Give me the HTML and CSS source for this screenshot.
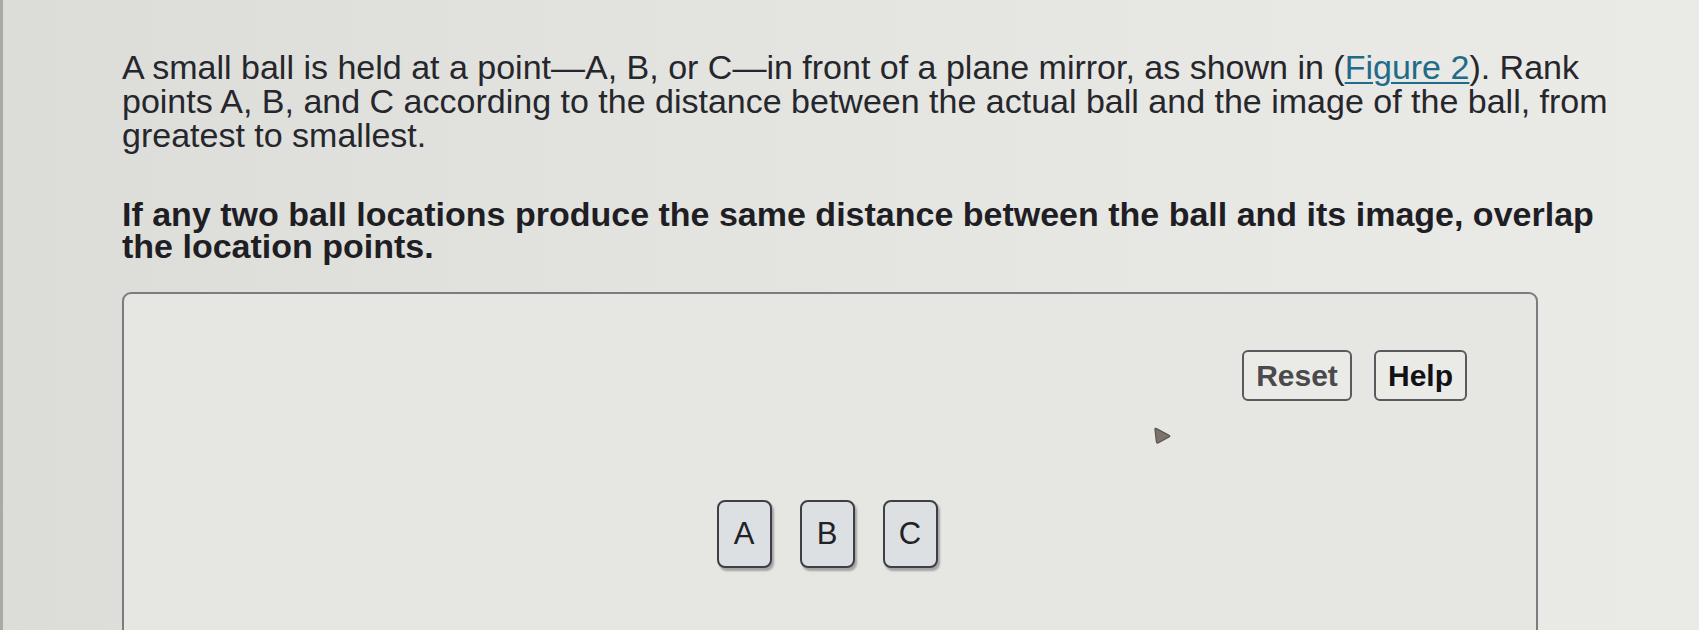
FILE: index.html
```html
<!DOCTYPE html>
<html lang="en">
<head>
<meta charset="utf-8">
<title>Plane mirror ranking</title>
<link rel="stylesheet" href="styles.css">
</head>
<body>
<div class="page">
  <div class="question">
    <p class="prompt">A small ball is held at a point—A, B, or C—in front of a plane mirror, as shown in (<a class="fig-link" href="#">Figure 2</a>). Rank points A, B, and C according to the distance between the actual ball and the image of the ball, from greatest to smallest.</p>
    <p class="instruction">If any two ball locations produce the same distance between the ball and its image, overlap the location points.</p>
  </div>
  <div class="workspace">
    <div class="toolbar">
      <button class="btn btn-reset" type="button">Reset</button>
      <button class="btn btn-help" type="button">Help</button>
    </div>
    <div class="tiles">
      <div class="tile">A</div>
      <div class="tile">B</div>
      <div class="tile">C</div>
    </div>
  </div>
  <svg class="cursor" width="20" height="18" viewBox="0 0 20 18" aria-hidden="true">
    <path d="M3 2.5 Q2.5 1 4.5 1.6 L17 8.2 Q18.6 9.2 17 10 L6.5 15.8 Q4.6 16.6 4.4 14.6 Z" fill="#7a726b" stroke="#5a534d" stroke-width="1.2"/>
  </svg>
</div>
</body>
</html>
```

FILE: styles.css
```css
html, body {
  margin: 0;
  padding: 0;
}

body {
  background: #e3e3df;
  font-family: "Liberation Sans", Arial, Helvetica, sans-serif;
  color: #2b2b32;
}

.page {
  position: relative;
  height: 630px;
  overflow: hidden;
  box-sizing: border-box;
  border-left: 3px solid #a9a9a7;
  padding: 50px 0 0 119px;
  background: linear-gradient(90deg, #dcddd8 0%, #e2e3de 35%, #e7e7e3 70%, #eaeae7 100%);
}

.question {
  width: 1505px;
}

.prompt,
.instruction {
  margin: 0;
  font-size: 34px;
}

.prompt {
  line-height: 34px;
  color: #26262d;
}

.instruction {
  margin-top: 46px;
  line-height: 32px;
  font-weight: bold;
  color: #1e1e24;
}

.fig-link {
  color: #1f6b89;
  text-decoration: underline;
  text-decoration-thickness: 2px;
  text-underline-offset: 3px;
}

.workspace {
  box-sizing: border-box;
  width: 1416px;
  height: 420px;
  margin-top: 30px;
  border: 2px solid #7b7b80;
  border-radius: 9px;
  background: #e6e6e2;
  padding: 56px 69px 0 0;
}

.toolbar {
  display: flex;
  justify-content: flex-end;
  gap: 22px;
}

.btn {
  box-sizing: border-box;
  height: 51px;
  padding: 0 12px;
  border: 2px solid #5a5a5e;
  border-radius: 6px;
  background: #eaeae7;
  font-family: "Liberation Sans", Arial, Helvetica, sans-serif;
  font-size: 30px;
  font-weight: bold;
  line-height: 47px;
}

.btn-reset {
  width: 110px;
  color: #4a4a4d;
}

.btn-help {
  width: 93px;
  color: #111116;
}

.tiles {
  display: flex;
  justify-content: center;
  gap: 28px;
  margin-top: 99px;
  padding-left: 63px;
}

.tile {
  box-sizing: border-box;
  width: 55px;
  height: 68px;
  display: flex;
  align-items: center;
  justify-content: center;
  border: 2px solid #3e3e47;
  border-radius: 8px;
  background: #dce0e2;
  box-shadow: 2px 3px 2px rgba(40, 40, 50, 0.35);
  font-size: 31px;
  color: #222226;
}

.cursor {
  position: absolute;
  left: 1149px;
  top: 427px;
}
```
